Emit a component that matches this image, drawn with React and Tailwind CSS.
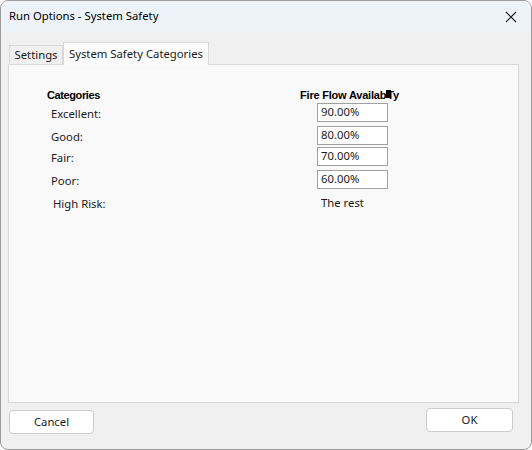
import React from "react";

const rows = [
  { label: "Excellent:", value: "90.00%", mt: "mt-0" },
  { label: "Good:", value: "80.00%", mt: "mt-[4px]" },
  { label: "Fair:", value: "70.00%", mt: "mt-[2px]" },
  { label: "Poor:", value: "60.00%", mt: "mt-[4px]" },
];

const ui = { fontFamily: '"Noto Sans", "Open Sans", sans-serif' };
const ms = { fontFamily: '"Liberation Sans", Arial, sans-serif' };

export default function App() {
  return (
    <div
      className="w-[532px] h-[450px] flex flex-col bg-[#f0f0f0] border border-[#9a9a9a] rounded-[8px] overflow-hidden text-[11.3px] text-[#1a1a1a]"
      style={ui}
    >
      {/* title bar */}
      <div className="h-[31px] shrink-0 flex items-center justify-between bg-[#eef3f9] pl-[8px] pr-[14px]">
        <span className="text-[11.3px] text-black">Run Options - System Safety</span>
        <svg width="12" height="12" viewBox="0 0 12 12" className="mt-[1px]">
          <path d="M1 1 L11 11 M11 1 L1 11" stroke="#1a1a1a" strokeWidth="1.1" fill="none" />
        </svg>
      </div>

      <div className="flex flex-col px-[7px] pt-[10px]">
        {/* tabs */}
        <div className="flex items-end h-[22px] pl-[1px]">
          <div className="h-[19px] w-[54px] flex items-center justify-center border border-b-0 border-[#d9d9d9] bg-[#f0f0f0] pt-[1px]">
            Settings
          </div>
          <div className="h-[23px] w-[146px] flex items-center justify-center border border-b-0 border-[#d9d9d9] bg-[#fcfcfc] -mb-px relative z-10">
            System Safety Categories
          </div>
        </div>

        {/* panel */}
        <div className="w-[511px] h-[339px] border border-[#d9d9d9] bg-[#f9f9f9] pt-[23px]">
          <div className="flex h-[14px] items-center text-[11px] font-bold text-black" style={ms}>
            <span className="ml-[38px] w-[253px] tracking-[-0.4px]">Categories</span>
            <span className="relative tracking-[-0.2px]">
              Fire Flow Availab
              <span className="absolute left-full top-[3px] w-[5px] h-[8px] bg-black" />
              <span className="absolute left-[calc(100%+1px)] top-0">Ty</span>
            </span>
          </div>

          <div className="flex flex-col mt-[1px]">
            {rows.map((r) => (
              <div key={r.label} className={`flex items-center h-[19px] ${r.mt}`}>
                <span className="ml-[42px] w-[266px] pt-[4px]">{r.label}</span>
                <div className="w-[71px] h-[19px] border border-[#a0a0a0] bg-white flex items-center pl-[3px]">
                  {r.value}
                </div>
              </div>
            ))}
            <div className="flex items-center h-[19px] mt-[4px]">
              <span className="ml-[44px] w-[268px] pt-[3px]">High Risk:</span>
              <span className="pt-[1px]">The rest</span>
            </div>
          </div>
        </div>

        {/* buttons */}
        <div className="flex justify-between items-start pl-[1px] pr-[11px]">
          <button className="mt-[7px] w-[85px] h-[24px] rounded-[4px] border border-[#cccccc] bg-white">
            Cancel
          </button>
          <button className="mt-[5px] w-[87px] h-[24px] rounded-[4px] border border-[#cccccc] bg-white">
            OK
          </button>
        </div>
      </div>
    </div>
  );
}
